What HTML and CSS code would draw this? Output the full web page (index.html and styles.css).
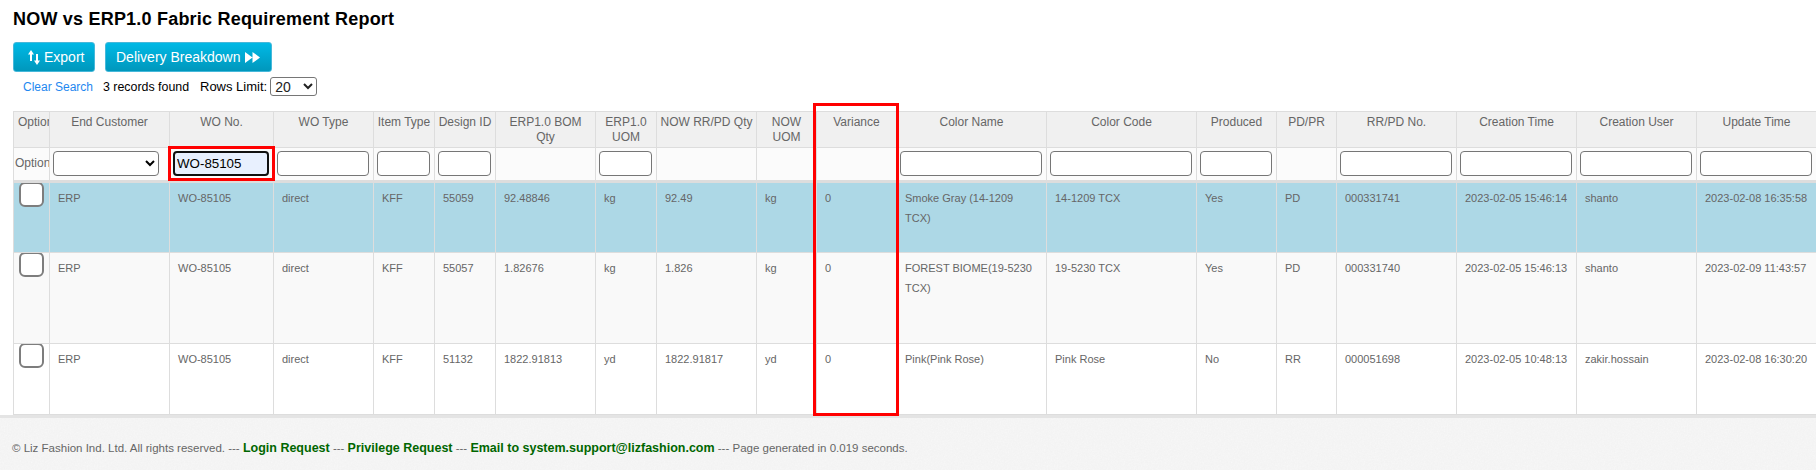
FILE: index.html
```html
<!DOCTYPE html>
<html lang="en">
<head>
<meta charset="utf-8">
<title>NOW vs ERP1.0 Fabric Requirement Report</title>
<link rel="stylesheet" href="styles.css">
</head>
<body>
<main class="page">
  <h1 class="title">NOW vs ERP1.0 Fabric Requirement Report</h1>
  <div class="actions">
    <a class="btn btn-export" href="#"><svg class="icon-sort" viewBox="0 0 12 15" width="12" height="15" aria-hidden="true"><path d="M3 0 L6 4.5 H4 V11 H2 V4.5 H0 Z M9 15 L12 10.5 H10 V4 H8 V10.5 H6 Z" fill="#fff"/></svg>Export</a>
    <a class="btn btn-delivery" href="#">Delivery Breakdown<svg class="icon-ff" viewBox="0 0 15 11" width="15" height="11" aria-hidden="true"><path d="M0 0 L7.5 5.5 L0 11 Z M7.5 0 L15 5.5 L7.5 11 Z" fill="#fff"/></svg></a>
  </div>
  <div class="meta">
    <a class="clear" href="#">Clear Search</a>
    <span class="found">3 records found</span>
    <label class="limit">Rows Limit:
      <select class="limit-select"><option>20</option></select>
    </label>
  </div>
  <table class="grid">
    <colgroup>
      <col class="c36"><col class="c120"><col class="c104"><col class="c100"><col class="c61"><col class="c61"><col class="c100"><col class="c61"><col class="c100"><col class="c60"><col class="c80"><col class="c150"><col class="c150"><col class="c80"><col class="c60"><col class="c120"><col class="c120"><col class="c120"><col class="c120">
    </colgroup>
    <thead>
      <tr class="head">
        <th class="th-option">Option</th><th>End Customer</th><th>WO No.</th><th>WO Type</th><th>Item Type</th><th>Design ID</th><th>ERP1.0 BOM<br>Qty</th><th>ERP1.0<br>UOM</th><th>NOW RR/PD Qty</th><th>NOW<br>UOM</th><th>Variance</th><th>Color Name</th><th>Color Code</th><th>Produced</th><th>PD/PR</th><th>RR/PD No.</th><th>Creation Time</th><th>Creation User</th><th>Update Time</th>
      </tr>
      <tr class="filters">
        <th class="f-option">Option</th>
        <th><select class="field field-select"><option></option></select></th>
        <th><input class="field field-focus" type="text" value="WO-85105"></th>
        <th><input class="field" type="text"></th>
        <th><input class="field" type="text"></th>
        <th><input class="field" type="text"></th>
        <th></th>
        <th><input class="field" type="text"></th>
        <th></th>
        <th></th>
        <th></th>
        <th><input class="field" type="text"></th>
        <th><input class="field" type="text"></th>
        <th><input class="field" type="text"></th>
        <th></th>
        <th><input class="field" type="text"></th>
        <th><input class="field" type="text"></th>
        <th><input class="field" type="text"></th>
        <th><input class="field" type="text"></th>
      </tr>
    </thead>
    <tbody>
      <tr class="row row-selected">
        <td class="cb-cell"><span class="cb"></span></td><td>ERP</td><td>WO-85105</td><td>direct</td><td>KFF</td><td>55059</td><td>92.48846</td><td>kg</td><td>92.49</td><td>kg</td><td>0</td><td>Smoke Gray (14-1209 TCX)</td><td>14-1209 TCX</td><td>Yes</td><td>PD</td><td>000331741</td><td>2023-02-05 15:46:14</td><td>shanto</td><td>2023-02-08 16:35:58</td>
      </tr>
      <tr class="row row-tall">
        <td class="cb-cell"><span class="cb"></span></td><td>ERP</td><td>WO-85105</td><td>direct</td><td>KFF</td><td>55057</td><td>1.82676</td><td>kg</td><td>1.826</td><td>kg</td><td>0</td><td>FOREST BIOME(19-5230 TCX)</td><td>19-5230 TCX</td><td>Yes</td><td>PD</td><td>000331740</td><td>2023-02-05 15:46:13</td><td>shanto</td><td>2023-02-09 11:43:57</td>
      </tr>
      <tr class="row row-plain">
        <td class="cb-cell"><span class="cb"></span></td><td>ERP</td><td>WO-85105</td><td>direct</td><td>KFF</td><td>51132</td><td>1822.91813</td><td>yd</td><td>1822.91817</td><td>yd</td><td>0</td><td>Pink(Pink Rose)</td><td>Pink Rose</td><td>No</td><td>RR</td><td>000051698</td><td>2023-02-05 10:48:13</td><td>zakir.hossain</td><td>2023-02-08 16:30:20</td>
      </tr>
    </tbody>
  </table>
  <div class="mark mark-wo"></div>
  <div class="mark mark-variance"></div>
</main>
<footer class="footer"><span>© Liz Fashion Ind. Ltd. All rights reserved. --- </span><a href="#">Login Request</a><span> --- </span><a href="#">Privilege Request</a><span> --- </span><a href="#">Email to system.support@lizfashion.com</a><span> --- Page generated in 0.019 seconds.</span></footer>
</body>
</html>
```
FILE: styles.css
```css
* { box-sizing: border-box; }
html, body { margin: 0; padding: 0; }
body {
  width: 1816px;
  height: 470px;
  overflow: hidden;
  background: #fff;
  font-family: "Liberation Sans", Arial, sans-serif;
  color: #666;
}
.page { position: relative; height: 415px; padding: 9px 0 0 13px; }
.title {
  margin: 0;
  font-size: 18px;
  line-height: 20px;
  font-weight: 700;
  color: #000;
  letter-spacing: 0.21px;
}
.actions { display: flex; gap: 10px; margin-top: 13px; height: 30px; }
.btn {
  display: flex;
  align-items: center;
  height: 30px;
  border: 1px solid #46b8da;
  border-radius: 3px;
  background: linear-gradient(#00b9e6, #0097bc);
  color: #fff;
  font-size: 14px;
  text-decoration: none;
}
.btn-export { width: 82px; padding-left: 14px; gap: 4px; }
.btn-delivery { width: 167px; padding-left: 10px; gap: 4px; }
.meta { display: flex; align-items: center; height: 20px; margin-top: 5px; padding-left: 10px; font-size: 12px; color: #000; }
.clear { color: #1e88f0; text-decoration: none; width: 80px; }
.found { width: 97px; font-size: 12.4px; }
.limit { display: flex; align-items: center; gap: 3px; margin-top: -1px; font-size: 13px; }
.limit-select { width: 47px; height: 19px; font: 14px "Liberation Sans", Arial, sans-serif; padding: 0; border-radius: 3px; border: 1px solid #767676; background: #fff; color: #222; }
.grid {
  table-layout: fixed;
  width: 1804px;
  margin-top: 14px;
  border-collapse: collapse;
  font-size: 11px;
}
.c36 { width: 36px; } .c60 { width: 60px; } .c61 { width: 61px; } .c80 { width: 80px; }
.c100 { width: 100px; } .c104 { width: 104px; } .c120 { width: 120px; } .c150 { width: 150px; }
.grid th, .grid td { border: 1px solid #ddd; overflow: hidden; }
.head th {
  height: 36px;
  padding: 3px 2px 0;
  background: #f0f0f0;
  font-size: 12px;
  line-height: 15px;
  font-weight: 400;
  text-align: center;
  vertical-align: top;
  color: #666;
  white-space: nowrap;
}
.grid .th-option { padding-left: 4px; text-align: left; }
.filters th {
  height: 34px;
  padding: 3px 4px 3px 3px;
  background: #fbfbfb;
  font-size: 12px;
  font-weight: 400;
  vertical-align: top;
  color: #666;
}
.grid .f-option { padding: 8px 1px 0; white-space: nowrap; }
.filters { border-bottom: 3px solid #ddd; }
.field {
  display: block;
  width: 100%;
  height: 25px;
  padding: 1px 2px;
  border: 1px solid #767676;
  border-radius: 4px;
  background: #fff;
  font: 13.33px "Liberation Sans", Arial, sans-serif;
  color: #000;
}
.field-select { width: 106px; }
.field-focus { border: 2px solid #101010; background: #e8f0fe; outline: 0; }
.row td { padding: 5px 8px; line-height: 20px; vertical-align: top; color: #666; }
.row-selected td { background: #add8e6; height: 71px; }
.row-tall td { background: #f9f9f9; height: 91px; }
.row-plain td { background: #fff; height: 71px; }
.grid .cb-cell { padding: 0 0 0 5px; }
.cb {
  display: block;
  width: 25px;
  height: 25px;
  margin-top: -1px;
  border: 2px solid #7d7d7d;
  border-top-width: 2px;
  border-radius: 6px;
  background: #fff;
}
.mark { position: absolute; border: 3px solid #f00; pointer-events: none; }
.mark-wo { left: 168px; top: 146px; width: 107px; height: 35px; }
.mark-variance { left: 813px; top: 103px; width: 86px; height: 313px; }
.footer {
  height: 55px;
  padding: 20px 0 0 12px;
  background: #f8f8f8 url("data:image/svg+xml,%3Csvg xmlns='http://www.w3.org/2000/svg' width='240' height='240'%3E%3Cfilter id='n'%3E%3CfeTurbulence type='fractalNoise' baseFrequency='0.7' numOctaves='2'/%3E%3CfeColorMatrix values='0 0 0 0 0.5 0 0 0 0 0.5 0 0 0 0 0.5 0 0 0 0.12 0'/%3E%3C/filter%3E%3Crect width='240' height='240' filter='url(%23n)'/%3E%3C/svg%3E");
  border-top: 3px solid #e4e4e4;
  font-size: 11.5px;
  line-height: 20px;
  color: #666;
  white-space: nowrap;
}
.footer a { color: #060; font-size: 12.5px; font-weight: 700; text-decoration: none; }
```
